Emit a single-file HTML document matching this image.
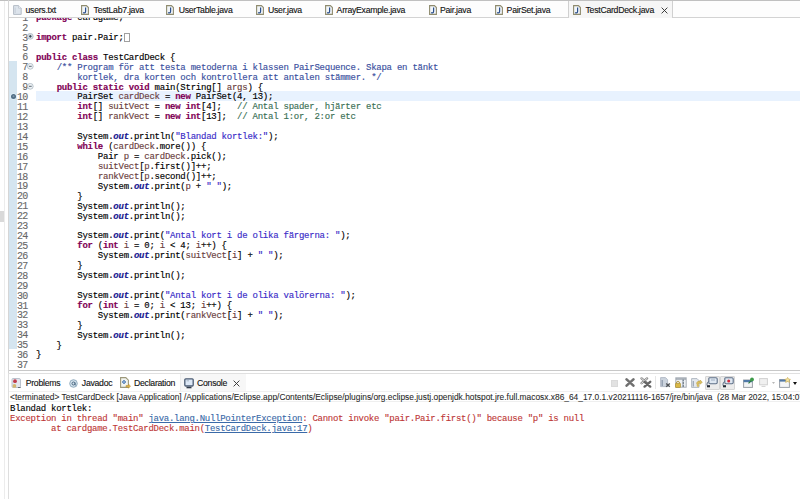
<!DOCTYPE html><html><head><meta charset="utf-8"><style>
*{margin:0;padding:0;box-sizing:border-box}
html,body{width:800px;height:499px;overflow:hidden;background:#fff}
body{position:relative;font-family:"Liberation Sans",sans-serif}
.abs{position:absolute}
#code{position:absolute;left:36px;top:14.1px;font-family:"Liberation Mono",monospace;font-size:9px;letter-spacing:-0.245px;color:#000;white-space:pre;-webkit-text-stroke:0.15px currentColor}
#nums{position:absolute;left:8.3px;width:19px;top:13.799999999999999px;font-family:"Liberation Mono",monospace;font-size:10px;letter-spacing:-0.845px;color:#666;-webkit-text-stroke:0.1px #666;text-align:right;white-space:pre}
.ln{height:9.93px;line-height:9.93px}
.k{color:#7f0055;font-weight:bold}
.c{color:#3a4f9e}
.g{color:#3a7055}
.s{color:#3a2cc8}
.o{color:#16168f;font-weight:bold;font-style:italic}
.v{color:#6a3e3e}
.ic{position:absolute}
.tt{position:absolute;top:0;height:18px;line-height:20px;transform:none;font-size:8.7px;letter-spacing:-0.26px;color:#111;-webkit-text-stroke:0.12px #111}
#con{position:absolute;left:10px;top:404.2px;font-family:"Liberation Mono",monospace;font-size:9px;letter-spacing:-0.275px;white-space:pre;-webkit-text-stroke:0.12px currentColor}
#con .l{height:10.05px;line-height:10.05px}
.err{color:#bd3636}
.lnk{color:#3a6aa8;text-decoration:underline}
</style></head><body>
<!-- outer left strip -->
<div class="abs" style="left:4px;top:0;width:1px;height:499px;background:#ececec"></div>
<div class="abs" style="left:0;top:211px;width:4px;height:11px;background:#d9d9d9"></div>

<!-- editor panel -->
<div class="abs" style="left:8px;top:0;width:792px;height:371px;border-left:1px solid #cfcfcf;border-top:1px solid #c4c4c4;border-bottom:1px solid #c8c8c8;background:#fff;overflow:hidden">
</div>
<div class="abs" style="left:36px;top:91.08px;width:764px;height:9.93px;background:#e8f2fe"></div>
<div class="abs" style="left:9px;top:61.29px;width:8px;height:287.96999999999997px;background:#d5e5f0"></div>
<div class="abs" style="left:0;top:0;width:800px;height:370px;overflow:hidden">
<div id="nums"><div class="ln">1</div><div class="ln">2</div><div class="ln">3</div><div class="ln">5</div><div class="ln">6</div><div class="ln">7</div><div class="ln">8</div><div class="ln">9</div><div class="ln">10</div><div class="ln">11</div><div class="ln">12</div><div class="ln">13</div><div class="ln">14</div><div class="ln">15</div><div class="ln">16</div><div class="ln">17</div><div class="ln">18</div><div class="ln">19</div><div class="ln">20</div><div class="ln">21</div><div class="ln">22</div><div class="ln">23</div><div class="ln">24</div><div class="ln">25</div><div class="ln">26</div><div class="ln">27</div><div class="ln">28</div><div class="ln">29</div><div class="ln">30</div><div class="ln">31</div><div class="ln">32</div><div class="ln">33</div><div class="ln">34</div><div class="ln">35</div><div class="ln">36</div><div class="ln">37</div></div>
<div id="code"><div class="ln"><span class="k">package</span> cardgame;&#8203;</div><div class="ln">&#8203;</div><div class="ln"><span class="k">import</span> pair.Pair;&#8203;</div><div class="ln">&#8203;</div><div class="ln"><span class="k">public</span> <span class="k">class</span> TestCardDeck {&#8203;</div><div class="ln">    <span class="c">/** Program för att testa metoderna i klassen PairSequence. Skapa en tänkt</span>&#8203;</div><div class="ln">        <span class="c">kortlek, dra korten och kontrollera att antalen stämmer. */</span>&#8203;</div><div class="ln">    <span class="k">public</span> <span class="k">static</span> <span class="k">void</span> main(String[] <span class="v">args</span>) {&#8203;</div><div class="ln">        PairSet <span class="v">cardDeck</span> = <span class="k">new</span> PairSet(4, 13);&#8203;</div><div class="ln">        <span class="k">int</span>[] <span class="v">suitVect</span> = <span class="k">new</span> <span class="k">int</span>[4];   <span class="g">// Antal spader, hjärter etc</span>&#8203;</div><div class="ln">        <span class="k">int</span>[] <span class="v">rankVect</span> = <span class="k">new</span> <span class="k">int</span>[13];  <span class="g">// Antal 1:or, 2:or etc</span>&#8203;</div><div class="ln">&#8203;</div><div class="ln">        System.<span class="o">out</span>.println(<span class="s">&quot;Blandad kortlek:&quot;</span>);&#8203;</div><div class="ln">        <span class="k">while</span> (<span class="v">cardDeck</span>.more()) {&#8203;</div><div class="ln">            Pair <span class="v">p</span> = <span class="v">cardDeck</span>.pick();&#8203;</div><div class="ln">            <span class="v">suitVect</span>[<span class="v">p</span>.first()]++;&#8203;</div><div class="ln">            <span class="v">rankVect</span>[<span class="v">p</span>.second()]++;&#8203;</div><div class="ln">            System.<span class="o">out</span>.print(<span class="v">p</span> + <span class="s">&quot; &quot;</span>);&#8203;</div><div class="ln">        }&#8203;</div><div class="ln">        System.<span class="o">out</span>.println();&#8203;</div><div class="ln">        System.<span class="o">out</span>.println();&#8203;</div><div class="ln">&#8203;</div><div class="ln">        System.<span class="o">out</span>.print(<span class="s">&quot;Antal kort i de olika färgerna: &quot;</span>);&#8203;</div><div class="ln">        <span class="k">for</span> (<span class="k">int</span> <span class="v">i</span> = 0; <span class="v">i</span> &lt; 4; <span class="v">i</span>++) {&#8203;</div><div class="ln">            System.<span class="o">out</span>.print(<span class="v">suitVect</span>[<span class="v">i</span>] + <span class="s">&quot; &quot;</span>);&#8203;</div><div class="ln">        }&#8203;</div><div class="ln">        System.<span class="o">out</span>.println();&#8203;</div><div class="ln">&#8203;</div><div class="ln">        System.<span class="o">out</span>.print(<span class="s">&quot;Antal kort i de olika valörerna: &quot;</span>);&#8203;</div><div class="ln">        <span class="k">for</span> (<span class="k">int</span> <span class="v">i</span> = 0; <span class="v">i</span> &lt; 13; <span class="v">i</span>++) {&#8203;</div><div class="ln">            System.<span class="o">out</span>.print(<span class="v">rankVect</span>[<span class="v">i</span>] + <span class="s">&quot; &quot;</span>);&#8203;</div><div class="ln">        }&#8203;</div><div class="ln">        System.<span class="o">out</span>.println();&#8203;</div><div class="ln">    }&#8203;</div><div class="ln">}&#8203;</div><div class="ln">&#8203;</div></div>
</div>
<!-- tab bar -->
<div class="abs" style="left:9px;top:1px;width:791px;height:17px;background:#fdfdfd;border-bottom:1px solid #d3d3d3"></div>
<div class="abs" style="left:568px;top:1px;width:105px;height:17px;background:#f6f6f6;border-left:1px solid #d0d0d0;border-right:1px solid #d0d0d0"></div>
<div class="abs" style="left:0;top:0;width:800px;height:1px;background:#c0c0c0"></div>
<svg class="ic" style="left:13px;top:5px" width="9" height="10" viewBox="0 0 9 10"><path d="M0.6 0.6H5.6L8.2 3.2V9.4H0.6Z" fill="#dde4ec" stroke="#b4bcc6" stroke-width="1"/><path d="M5.6 0.6V3.2H8.2" fill="#f4f6f8" stroke="#b4bcc6" stroke-width="0.7"/><path d="M2.2 2.6V8" stroke="#c6ced8" stroke-width="1"/></svg><div class="tt" style="left:25.5px">users.txt</div><svg class="ic" style="left:81px;top:5px" width="8" height="10" viewBox="0 0 8 10"><path d="M0.6 0.6H5.4L7.4 2.6V9.4H0.6Z" fill="#f1f5f9" stroke="#8f8b6e" stroke-width="1.1"/><path d="M4.6 2.4V6.6Q4.6 7.9 3.4 7.9Q2.7 7.9 2.3 7.3" fill="none" stroke="#2b4f8c" stroke-width="1.2"/></svg><div class="tt" style="left:93.6px">TestLab7.java</div><svg class="ic" style="left:166px;top:5px" width="8" height="10" viewBox="0 0 8 10"><path d="M0.6 0.6H5.4L7.4 2.6V9.4H0.6Z" fill="#f1f5f9" stroke="#8f8b6e" stroke-width="1.1"/><path d="M4.6 2.4V6.6Q4.6 7.9 3.4 7.9Q2.7 7.9 2.3 7.3" fill="none" stroke="#2b4f8c" stroke-width="1.2"/></svg><div class="tt" style="left:178.7px">UserTable.java</div><svg class="ic" style="left:255.5px;top:5px" width="8" height="10" viewBox="0 0 8 10"><path d="M0.6 0.6H5.4L7.4 2.6V9.4H0.6Z" fill="#f1f5f9" stroke="#8f8b6e" stroke-width="1.1"/><path d="M4.6 2.4V6.6Q4.6 7.9 3.4 7.9Q2.7 7.9 2.3 7.3" fill="none" stroke="#2b4f8c" stroke-width="1.2"/></svg><div class="tt" style="left:268px">User.java</div><svg class="ic" style="left:324.5px;top:5px" width="8" height="10" viewBox="0 0 8 10"><path d="M0.6 0.6H5.4L7.4 2.6V9.4H0.6Z" fill="#f1f5f9" stroke="#8f8b6e" stroke-width="1.1"/><path d="M4.6 2.4V6.6Q4.6 7.9 3.4 7.9Q2.7 7.9 2.3 7.3" fill="none" stroke="#2b4f8c" stroke-width="1.2"/></svg><div class="tt" style="left:336.6px">ArrayExample.java</div><svg class="ic" style="left:428.5px;top:5px" width="8" height="10" viewBox="0 0 8 10"><path d="M0.6 0.6H5.4L7.4 2.6V9.4H0.6Z" fill="#f1f5f9" stroke="#8f8b6e" stroke-width="1.1"/><path d="M4.6 2.4V6.6Q4.6 7.9 3.4 7.9Q2.7 7.9 2.3 7.3" fill="none" stroke="#2b4f8c" stroke-width="1.2"/></svg><div class="tt" style="left:440px">Pair.java</div><svg class="ic" style="left:494.5px;top:5px" width="8" height="10" viewBox="0 0 8 10"><path d="M0.6 0.6H5.4L7.4 2.6V9.4H0.6Z" fill="#f1f5f9" stroke="#8f8b6e" stroke-width="1.1"/><path d="M4.6 2.4V6.6Q4.6 7.9 3.4 7.9Q2.7 7.9 2.3 7.3" fill="none" stroke="#2b4f8c" stroke-width="1.2"/></svg><div class="tt" style="left:506.6px">PairSet.java</div><svg class="ic" style="left:573px;top:5px" width="8" height="10" viewBox="0 0 8 10"><path d="M0.6 0.6H5.4L7.4 2.6V9.4H0.6Z" fill="#f1f5f9" stroke="#8f8b6e" stroke-width="1.1"/><path d="M4.6 2.4V6.6Q4.6 7.9 3.4 7.9Q2.7 7.9 2.3 7.3" fill="none" stroke="#2b4f8c" stroke-width="1.2"/></svg><div class="tt" style="left:585.5px">TestCardDeck.java</div>
<svg class="ic" style="left:661px;top:6.5px" width="7" height="7" viewBox="0 0 7 7"><path d="M0.6 0.6L6.4 6.4M6.4 0.6L0.6 6.4" stroke="#2a2a2a" stroke-width="0.9"/></svg>

<!-- fold icons -->
<svg class="ic" style="left:27.2px;top:32.7px" width="7" height="7" viewBox="0 0 7 7"><circle cx="3.3" cy="3.3" r="2.9" fill="#dce4ea" stroke="#a4b0ba" stroke-width="0.7"/><path d="M1.9 3.3H4.7M3.3 1.9V4.7" stroke="#34434f" stroke-width="1"/></svg>
<svg class="ic" style="left:27.2px;top:62.7px" width="7" height="7" viewBox="0 0 7 7"><circle cx="3.3" cy="3.3" r="2.9" fill="#eef2f5" stroke="#a4b0ba" stroke-width="0.7"/><path d="M1.9 3.3H4.7" stroke="#4a5864" stroke-width="0.9"/></svg>
<svg class="ic" style="left:27.2px;top:82.6px" width="7" height="7" viewBox="0 0 7 7"><circle cx="3.3" cy="3.3" r="2.9" fill="#eef2f5" stroke="#a4b0ba" stroke-width="0.7"/><path d="M1.9 3.3H4.7" stroke="#4a5864" stroke-width="0.9"/></svg>
<svg class="ic" style="left:9.5px;top:92.5px" width="7" height="7" viewBox="0 0 7 7"><circle cx="3.5" cy="3.5" r="3.2" fill="#dff0fa"/><circle cx="3.5" cy="3.5" r="2.5" fill="#4f6c84"/><circle cx="3.5" cy="3.2" r="1" fill="#7f98ac"/></svg>
<!-- import fold box -->
<div class="abs" style="left:123.5px;top:33px;width:6px;height:8.5px;border:1px solid #a0a0a0"></div>

<!-- console panel -->
<div class="abs" style="left:8px;top:0;width:1px;height:499px;background:#d6d6d6"></div>
<div class="abs" style="left:8px;top:373px;width:792px;height:126px;border-left:1px solid #dedede;border-top:1px solid #e0e0e0;background:#fff"></div>
<div class="abs" style="left:179.5px;top:374px;width:66px;height:17px;background:#f7f7f7;border-left:1px solid #ededed"></div>
<div class="abs" style="left:9px;top:401px;width:791px;height:1px;background:#efefef"></div><div class="abs" style="left:9px;top:391px;width:791px;height:1px;background:#f0f0f0"></div>

<!-- console view tab icons -->
<svg class="ic" style="left:11px;top:377px" width="11" height="12" viewBox="0 0 11 12"><path d="M2 1.5H8Q9.5 1.5 9.5 3V9.5Q9.5 10.5 8.5 10.5H2Q1 10.5 1 9.5V2.5Q1 1.5 2 1.5Z" fill="#e3e6ee" stroke="#b4bcc8" stroke-width="0.9"/><circle cx="4" cy="4.2" r="1.9" fill="#c03a4c"/><circle cx="3.4" cy="8.9" r="1.9" fill="#d4b670"/><path d="M7 10.5H9.6" stroke="#606870" stroke-width="1"/></svg>
<svg class="ic" style="left:69px;top:378.5px" width="9" height="9" viewBox="0 0 9 9"><circle cx="4.5" cy="4.5" r="3.8" fill="#d3e2ec" stroke="#8aa6ba" stroke-width="0.9"/><circle cx="4.5" cy="4.5" r="1.5" fill="none" stroke="#3f5d78" stroke-width="0.9"/><path d="M6 3.5V5.5Q6 6.3 7 6" fill="none" stroke="#3f5d78" stroke-width="0.8"/></svg>
<svg class="ic" style="left:120px;top:377px" width="11" height="12" viewBox="0 0 11 12"><path d="M0.6 0.6H5.8L8.4 3.2V10.4H0.6Z" fill="#f2f4f0" stroke="#9c987a" stroke-width="1.1"/><path d="M2 5L4 3L6 5L4 7Z" fill="#7aa0d0" stroke="#4870a8" stroke-width="0.6"/><path d="M6 8.5H8.5V7L10.5 9.2L8.5 11.3V10H6Z" fill="#e0b850" stroke="#b08a30" stroke-width="0.5"/></svg>
<svg class="ic" style="left:183.5px;top:378px" width="10" height="11" viewBox="0 0 10 11"><rect x="0.8" y="0.8" width="8.4" height="7.2" rx="1" fill="#dde8f6" stroke="#4b5b72" stroke-width="1.3"/><path d="M2.5 2.8H5" stroke="#9aa8b8" stroke-width="0.8"/><path d="M2.5 9.6H7.5" stroke="#2f3a48" stroke-width="1.4"/></svg>

<!-- console toolbar icons -->
<div class="abs" style="left:610.5px;top:379.5px;width:7.5px;height:7px;background:#e2e2e2;border:1px solid #dadada"></div>
<svg class="ic" style="left:625px;top:378px" width="10" height="9" viewBox="0 0 10 9"><path d="M1.6 1.4L8.4 7.6M8.4 1.4L1.6 7.6" stroke="#707070" stroke-width="2.6" stroke-linecap="round"/></svg>
<svg class="ic" style="left:640px;top:377px" width="12" height="11" viewBox="0 0 12 11"><path d="M1.6 1.4L7 6.2M7 1.4L1.6 6.2" stroke="#8a8a8a" stroke-width="2.4" stroke-linecap="round"/><path d="M1.6 1.4L7 6.2M7 1.4L1.6 6.2" stroke="#f0f0f0" stroke-width="0.9" stroke-linecap="round"/><path d="M4.6 4.8L10.2 9.6M10.2 4.8L4.6 9.6" stroke="#666" stroke-width="2.4" stroke-linecap="round"/></svg>
<div class="abs" style="left:655px;top:376px;width:1px;height:13px;background:#e6e6e6"></div>
<svg class="ic" style="left:659.5px;top:377px" width="11" height="11" viewBox="0 0 11 11"><path d="M0.6 0.6H5.5L7.6 2.7V9.6H0.6Z" fill="#ccd4de" stroke="#b0b8c4" stroke-width="0.9"/><path d="M2.2 3V9" stroke="#8896a8" stroke-width="1.2"/><path d="M6.2 6.5L9.8 9.8M9.8 6.5L6.2 9.8" stroke="#505458" stroke-width="1.4"/></svg>
<svg class="ic" style="left:675px;top:377px" width="12" height="11" viewBox="0 0 12 11"><rect x="0.8" y="0.8" width="10.4" height="9.4" fill="#eef1f4" stroke="#a8aeb6" stroke-width="1"/><path d="M1 2H11" stroke="#8c96a0" stroke-width="1.2"/><path d="M8.2 2.5V10" stroke="#7c8894" stroke-width="1.6"/><path d="M8.2 4V5M8.2 7V8" stroke="#e8ecf0" stroke-width="0.9"/><rect x="0.5" y="6.3" width="5" height="4.2" rx="0.6" fill="#d9b845" stroke="#a88a2a" stroke-width="0.6"/><path d="M1.6 6.3V5Q3 3.3 4.4 5V6.3" fill="none" stroke="#a88a2a" stroke-width="0.8"/></svg>
<svg class="ic" style="left:691px;top:377.5px" width="12" height="10" viewBox="0 0 12 10"><path d="M0.6 0.6H6L8 2.6V9.4H0.6Z" fill="#e4e8ee" stroke="#aab2bc" stroke-width="0.9"/><path d="M2.3 3V8.5" stroke="#98a4b2" stroke-width="1.2"/><path d="M5.5 5Q6.5 2.6 9.2 3.2V2L11.3 4.2L9.2 6.3V5Q7.5 4.6 6.5 7.5Z" fill="#dcc062" stroke="#b49a3c" stroke-width="0.5"/><circle cx="7" cy="7.6" r="1.3" fill="#d8bc60"/></svg>
<div class="abs" style="left:704.5px;top:375.5px;width:15px;height:14px;background:#ececec;border:1px solid #d6d6d6;border-radius:1px"></div>
<div class="abs" style="left:720px;top:375.5px;width:15px;height:14px;background:#ececec;border:1px solid #d6d6d6;border-radius:1px"></div>
<svg class="ic" style="left:706px;top:377px" width="12" height="11" viewBox="0 0 12 11"><path d="M3.5 0.8H10Q11.2 0.8 11.2 2V5.5Q11.2 6.7 10 6.7H4Q2.8 6.7 2.8 5.5V2Q2.8 0.8 3.5 0.8Z" fill="#dfe8f2" stroke="#5f7088" stroke-width="1.1"/><path d="M5 3H9" stroke="#98a8bc" stroke-width="0.9"/><path d="M2.8 4.5Q1 5 1 7.2V8.5" fill="none" stroke="#5f7088" stroke-width="1"/><path d="M1 8.2H4V10.3H1Z" fill="#222a34"/></svg>
<svg class="ic" style="left:721.5px;top:377px" width="12" height="11" viewBox="0 0 12 11"><path d="M3.5 0.8H10Q11.2 0.8 11.2 2V5.5Q11.2 6.7 10 6.7H4Q2.8 6.7 2.8 5.5V2Q2.8 0.8 3.5 0.8Z" fill="#dfe8f2" stroke="#5f7088" stroke-width="1.1"/><circle cx="6.7" cy="4" r="1.5" fill="#d4283c"/><path d="M2.8 4.5Q1 5 1 7.2V8.5" fill="none" stroke="#5f7088" stroke-width="1"/><path d="M1 8.2H4V10.3H1Z" fill="#222a34"/></svg>
<svg class="ic" style="left:743px;top:377px" width="11" height="11" viewBox="0 0 11 11"><rect x="0.6" y="3" width="8.8" height="7.4" fill="#f2f4f6" stroke="#9a9fa6" stroke-width="1"/><rect x="0.6" y="3" width="8.8" height="2.2" fill="#4f79a8"/><path d="M5.5 6.3L9 2.8" stroke="#2c7a3a" stroke-width="1.2"/><circle cx="9" cy="2.4" r="1.9" fill="#3c9a48"/></svg>
<svg class="ic" style="left:759px;top:378px" width="9" height="9" viewBox="0 0 9 9"><rect x="0.6" y="0.6" width="7.8" height="6.2" fill="#f0f0f0" stroke="#d0d0d0" stroke-width="1"/><path d="M2.5 8.4H6.5" stroke="#d2d2d2" stroke-width="1"/></svg>
<svg class="ic" style="left:771.5px;top:381.5px" width="3" height="2" viewBox="0 0 3 2"><path d="M0 0H3L1.5 2Z" fill="#b8b8b8"/></svg>
<svg class="ic" style="left:779px;top:377px" width="12" height="11" viewBox="0 0 12 11"><rect x="0.6" y="2.6" width="9.8" height="7.8" fill="#f4f6f8" stroke="#9aa0a8" stroke-width="1"/><rect x="0.6" y="2.6" width="9.8" height="2" fill="#5078a6"/><path d="M8.6 0.4L9.6 2.1L11.4 2.3L10.2 3.6L10.6 5.4L8.6 4.5L6.6 5.4L7 3.6L5.8 2.3L7.6 2.1Z" fill="#f6e4a0" stroke="#c8aa50" stroke-width="0.6"/></svg>
<svg class="ic" style="left:792.5px;top:382px" width="4" height="3" viewBox="0 0 4 3"><path d="M0 0H4L2 3Z" fill="#111"/></svg>
<div class="tt" style="left:25.7px;top:374px;height:18px;line-height:18px">Problems</div>
<div class="tt" style="left:81.8px;top:374px;height:18px;line-height:18px">Javadoc</div>
<div class="tt" style="left:134px;top:374px;height:18px;line-height:18px">Declaration</div>
<div class="tt" style="left:197px;top:374px;height:18px;line-height:18px">Console</div>
<svg class="ic" style="left:233px;top:379.5px" width="7" height="7" viewBox="0 0 7 7"><path d="M0.6 0.6L6.4 6.4M6.4 0.6L0.6 6.4" stroke="#2a2a2a" stroke-width="0.9"/></svg>
<div class="abs" style="left:10px;top:391px;font-size:8.4px;line-height:12px;color:#2a2a2a;-webkit-text-stroke:0.08px #2a2a2a;white-space:pre">&lt;terminated&gt; TestCardDeck [Java Application] /Applications/Eclipse.app/Contents/Eclipse/plugins/org.eclipse.justj.openjdk.hotspot.jre.full.macosx.x86_64_17.0.1.v20211116-1657/jre/bin/java  (28 Mar 2022, 15:04:07)</div>
<div id="con"><div class="l">Blandad kortlek:</div><div class="l err">Exception in thread "main" <span class="lnk">java.lang.NullPointerException</span>: Cannot invoke "pair.Pair.first()" because "p" is null</div><div class="l err">        at cardgame.TestCardDeck.main(<span class="lnk">TestCardDeck.java:17</span>)</div></div>
</body></html>
